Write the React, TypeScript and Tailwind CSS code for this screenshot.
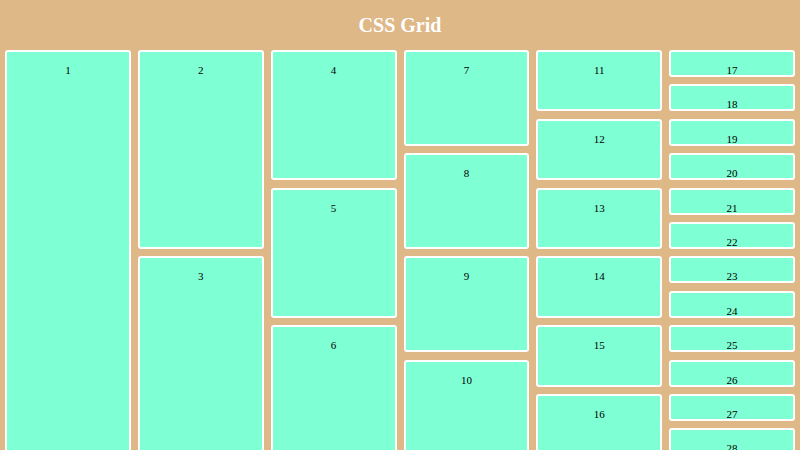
const spans: { n: number; span: string }[] = [
  { n: 1, span: "row-span-12" },
  ...[2, 3].map((n) => ({ n, span: "row-span-6" })),
  ...[4, 5, 6].map((n) => ({ n, span: "row-span-4" })),
  ...[7, 8, 9, 10].map((n) => ({ n, span: "row-span-3" })),
  ...[11, 12, 13, 14, 15, 16].map((n) => ({ n, span: "row-span-2" })),
  ...Array.from({ length: 12 }, (_, i) => ({ n: 17 + i, span: "row-span-1" })),
]

const App = () => {
  return (
    <div className="h-[450px] w-full overflow-hidden bg-[#deb887] font-['Liberation_Serif',serif]">
      <header className="flex h-[50px] items-center justify-center">
        <h1 className="text-[20px] font-bold leading-none text-white">CSS Grid</h1>
      </header>
      <div className="grid grid-flow-col grid-cols-6 grid-rows-[repeat(12,27px)] gap-x-[7px] gap-y-[7.4px] px-[5px]">
        {spans.map((item) => (
          <div
            key={item.n}
            className={`${item.span} rounded-[3px] border-2 border-white bg-[#7fffd4] pt-[12px] text-center text-[11px] leading-[12px] text-black`}
          >
            {item.n}
          </div>
        ))}
      </div>
    </div>
  )
}

export default App
